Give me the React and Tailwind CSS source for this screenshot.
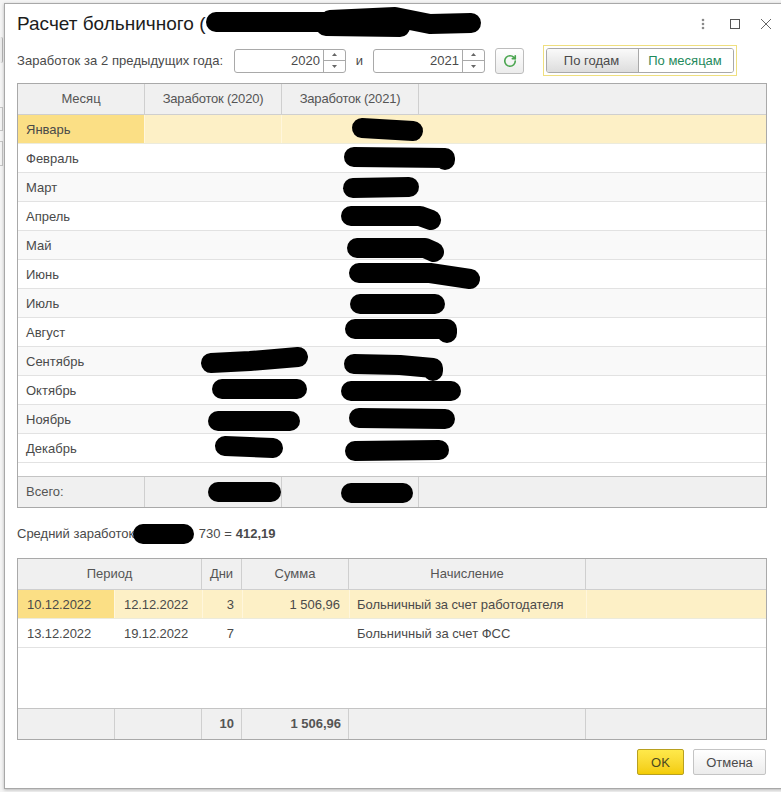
import { RotateCw } from 'lucide-react';

const months = [
  { name: 'Январь', selected: true },
  { name: 'Февраль' },
  { name: 'Март', alt: true },
  { name: 'Апрель' },
  { name: 'Май', alt: true },
  { name: 'Июнь' },
  { name: 'Июль', alt: true },
  { name: 'Август' },
  { name: 'Сентябрь', alt: true },
  { name: 'Октябрь' },
  { name: 'Ноябрь', alt: true },
  { name: 'Декабрь' },
];

// scribbles over the private data, page coordinates
const scribbles = [
  'M216 22 L330 22',
  'M326 26 L400 27',
  'M330 20 L395 17 L430 24 L471 23',
  'M143 534 L184 534',
  'M362 128 L413 131',
  'M354 157 L445 158 L445 160',
  'M353 188 L409 187',
  'M351 216 L420 216 L431 220',
  'M357 248 L425 248 L434 252',
  'M359 273 L430 273 L470 279',
  'M360 304 L435 304',
  'M355 329 L447 329 L447 333',
  'M211 363 L250 361 L298 357',
  'M354 364 L400 365 L433 368 L433 371',
  'M222 389 L297 389',
  'M351 391 L451 391',
  'M218 421 L290 421',
  'M359 418 L445 419',
  'M225 446 L273 448',
  'M355 451 L439 450',
  'M218 492 L271 492',
  'M351 493 L403 493',
];

function YearInput({ value }) {
  return (
    <div className="flex h-[24px] w-[112px] rounded-[3px] border border-[#a9a9a9] bg-white">
      <div className="flex-1 pr-[3px] text-right leading-[22px]">{value}</div>
      <div className="flex w-[22px] flex-col border-l border-[#a9a9a9]">
        <div className="flex flex-1 items-center justify-center border-b border-[#a9a9a9]">
          <svg width="5" height="3" viewBox="0 0 5 3"><path d="M2.5 0 L5 3 L0 3 Z" fill="#666" /></svg>
        </div>
        <div className="flex flex-1 items-center justify-center">
          <svg width="5" height="3" viewBox="0 0 5 3"><path d="M0 0 L5 0 L2.5 3 Z" fill="#666" /></svg>
        </div>
      </div>
    </div>
  );
}

function MonthRow({ row }) {
  const bg = row.selected ? 'bg-[#fdf0c6]' : row.alt ? 'bg-[#f9f9f9]' : 'bg-white';
  return (
    <div className={`flex h-[29px] border-b ${row.selected ? 'border-[#ecebdc]' : 'border-[#e2e2e2]'} ${bg}`}>
      <div className={`w-[126px] pl-[8px] leading-[30px] ${row.selected ? 'bg-[#fbdf85]' : ''}`}>{row.name}</div>
      <div className={`w-[137px] ${row.selected ? 'border-l border-[#fff6dc]' : ''}`} />
      <div className={`w-[137px] ${row.selected ? 'border-l border-[#fff6dc]' : ''}`} />
    </div>
  );
}

export default function App() {
  return (
    <div className="relative h-[792px] w-[781px] overflow-hidden bg-[#f4f4f4] text-[13px] text-[#4a4a4a] [font-family:'Liberation_Sans',Arial,sans-serif]">
      {/* bits of the page behind the dialog */}
      <div className="absolute left-0 top-[37px] h-[26px] w-[3px] rounded-r-[2px] border-r border-[#b5b5b5] bg-[#ececec]" />
      <div className="absolute left-0 top-[107px] h-[24px] w-[3px] border-y border-r border-[#c4c4c4]" />
      <div className="absolute left-0 top-[141px] h-[25px] w-[3px] border-y border-r border-[#c4c4c4]" />

      <div className="absolute left-[4px] top-[3px] h-[786px] w-[790px] border border-[#a8a8a8] bg-white px-[12px] shadow-[0_1px_3px_rgba(0,0,0,0.25)]">
        <div className="flex h-[41px] w-[755px] items-center pb-[2px]">
          <div className="text-[19px] leading-none text-[#1c1c1c]">Расчет больничного (</div>
          <div className="ml-auto flex items-center">
            <svg width="4" height="12" viewBox="0 0 4 12" className="mr-[25px]" fill="#8a8a8a">
              <circle cx="2" cy="2" r="1.3" />
              <circle cx="2" cy="6" r="1.3" />
              <circle cx="2" cy="10" r="1.3" />
            </svg>
            <div className="mr-[20px] h-[10px] w-[10px] border border-[#555]" />
            <svg width="12" height="12" viewBox="0 0 12 12" stroke="#666" strokeWidth="1">
              <path d="M1 1 L11 11 M11 1 L1 11" />
            </svg>
          </div>
        </div>

        <div className="flex h-[31px] items-center">
          <div className="w-[217px] tracking-[0.07px]">Заработок за 2 предыдущих года:</div>
          <YearInput value="2020" />
          <div className="w-[27px] text-center">и</div>
          <YearInput value="2021" />
          <button className="ml-[10px] flex h-[26px] w-[29px] items-center justify-center rounded-[3px] border border-[#bdbdbd] bg-gradient-to-b from-white to-[#ececec]">
            <RotateCw size={14} strokeWidth={2.8} className="text-[#4aa54f]" />
          </button>
          <div className="ml-[19px] h-[31px] w-[194px] border border-[#efdf7f] p-[2px]">
            <div className="flex h-[25px] w-[188px] overflow-hidden rounded-[3px] border border-[#a9a9a9]">
              <div className="w-[91px] bg-gradient-to-b from-[#fafafa] to-[#dddddd] pr-[2px] text-center leading-[24px]">По годам</div>
              <div className="flex-1 border-l border-[#a9a9a9] bg-white pr-[2px] text-center leading-[24px] text-[#1f8a5c]">По месяцам</div>
            </div>
          </div>
        </div>

        {/* earnings by month */}
        <div className="mt-[7px] w-[750px] border border-[#a9a9a9]">
          <div className="flex h-[31px] border-b border-[#cfcfcf] bg-[#f0f0f0] text-center leading-[30px] text-[#555]">
            <div className="w-[127px] border-r border-[#cfcfcf]">Месяц</div>
            <div className="w-[137px] border-r border-[#cfcfcf] tracking-[-0.2px]">Заработок (2020)</div>
            <div className="w-[137px] border-r border-[#cfcfcf] tracking-[-0.2px]">Заработок (2021)</div>
          </div>
          {months.map((row) => (
            <MonthRow key={row.name} row={row} />
          ))}
          <div className="h-[13px]" />
          <div className="flex h-[31px] border-t border-[#c4c4c4] bg-[#f0f0f0] leading-[30px] text-[#555]">
            <div className="w-[127px] border-r border-[#cfcfcf] pl-[8px]">Всего:</div>
            <div className="w-[137px] border-r border-[#cfcfcf]" />
            <div className="w-[137px] border-r border-[#cfcfcf]" />
          </div>
        </div>

        <div className="flex h-[50px] w-[750px] items-center pt-[1px]">
          Средний заработок:
          <span className="ml-[61px]">730 = </span>
          <span className="ml-[4px] font-bold">412,19</span>
        </div>

        {/* accruals */}
        <div className="w-[750px] border border-[#a9a9a9]">
          <div className="flex h-[31px] border-b border-[#cfcfcf] bg-[#f0f0f0] text-center leading-[29px] text-[#555]">
            <div className="w-[184px] border-r border-[#cfcfcf]">Период</div>
            <div className="w-[40px] border-r border-[#cfcfcf]">Дни</div>
            <div className="w-[107px] border-r border-[#cfcfcf]">Сумма</div>
            <div className="w-[237px] border-r border-[#cfcfcf]">Начисление</div>
          </div>
          <div className="flex h-[29px] border-b border-[#ecebdc] bg-[#fdf0c6] leading-[30px]">
            <div className="w-[96px] bg-[#fbdf85] pl-[9px] tracking-[-0.1px]">10.12.2022</div>
            <div className="w-[88px] border-l border-[#fff6dc] pl-[9px] tracking-[-0.1px]">12.12.2022</div>
            <div className="w-[40px] border-l border-[#fff6dc] pr-[8px] text-right">3</div>
            <div className="w-[107px] border-l border-[#fff6dc] pr-[9px] text-right">1 506,96</div>
            <div className="w-[237px] border-l border-[#fff6dc] pl-[7px] tracking-[-0.05px]">Больничный за счет работодателя</div>
            <div className="flex-1 border-l border-[#fff6dc]" />
          </div>
          <div className="flex h-[29px] border-b border-[#e2e2e2] leading-[30px]">
            <div className="w-[96px] pl-[9px] tracking-[-0.1px]">13.12.2022</div>
            <div className="w-[88px] pl-[10px] tracking-[-0.1px]">19.12.2022</div>
            <div className="w-[40px] pr-[8px] text-right">7</div>
            <div className="w-[107px]" />
            <div className="w-[237px] pl-[8px]">Больничный за счет ФСС</div>
          </div>
          <div className="h-[60px]" />
          <div className="flex h-[31px] border-t border-[#c4c4c4] bg-[#f0f0f0] font-bold leading-[30px] text-[#555]">
            <div className="w-[97px] border-r border-[#cfcfcf]" />
            <div className="w-[87px] border-r border-[#cfcfcf]" />
            <div className="w-[40px] border-r border-[#cfcfcf] pr-[7px] text-right">10</div>
            <div className="w-[107px] border-r border-[#cfcfcf] pr-[7px] text-right">1 506,96</div>
            <div className="w-[237px] border-r border-[#cfcfcf]" />
          </div>
        </div>

        <div className="mt-[9px] flex w-[749px] justify-end gap-[9px]">
          <button className="h-[26px] w-[47px] rounded-[2px] border border-[#b8a020] bg-gradient-to-b from-[#ffe94a] to-[#f3cc00] pt-[1px] text-[#4a4a20]">OK</button>
          <button className="h-[26px] w-[73px] rounded-[2px] border border-[#c4c4c4] bg-gradient-to-b from-white to-[#ececec] pt-[1px]">Отмена</button>
        </div>
      </div>

      {/* black marker over private data */}
      <svg className="pointer-events-none absolute left-0 top-0" width="781" height="792" fill="none" stroke="#000" strokeWidth="20" strokeLinecap="round" strokeLinejoin="round">
        {scribbles.map((d) => (
          <path key={d} d={d} />
        ))}
      </svg>
    </div>
  );
}
